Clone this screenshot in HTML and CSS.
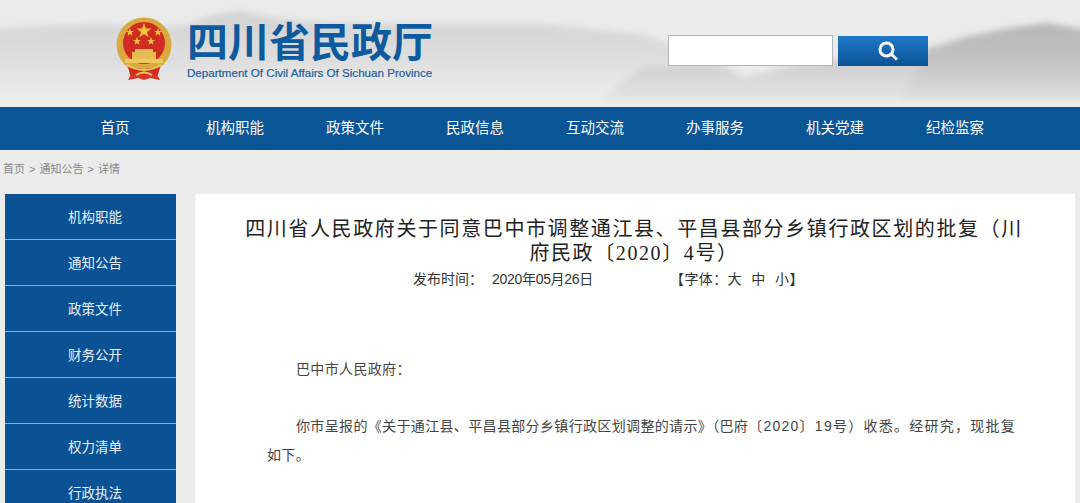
FILE: index.html
```html
<!DOCTYPE html>
<html lang="zh-CN">
<head>
  <meta charset="UTF-8" />
  <meta name="viewport" content="width=device-width, initial-scale=1" />
  <title>四川省民政厅</title>
  <link rel="stylesheet" href="styles.css">
</head>
<body>
  <header class="header">
    <svg class="header-bg" viewBox="0 0 1080 107" preserveAspectRatio="none" aria-hidden="true">
      <defs>
        <filter id="ink" filterUnits="userSpaceOnUse" x="-40" y="-40" width="1160" height="190"><feGaussianBlur stdDeviation="3" /></filter>
        <linearGradient id="left-hill" x1="0" y1="0" x2="0" y2="1">
          <stop offset="0" stop-color="#d2d2d2" />
          <stop offset="0.55" stop-color="#dedede" />
          <stop offset="1" stop-color="#ededed" />
        </linearGradient>
        <linearGradient id="mid-hill" x1="0" y1="0" x2="0" y2="1">
          <stop offset="0" stop-color="#c8c8c8" />
          <stop offset="1" stop-color="#e4e4e4" />
        </linearGradient>
        <linearGradient id="right-hill" x1="0" y1="0" x2="0" y2="1">
          <stop offset="0" stop-color="#b6b6b6" />
          <stop offset="0.6" stop-color="#c6c6c6" />
          <stop offset="1" stop-color="#dfdfdf" />
        </linearGradient>
      </defs>
      <path filter="url(#ink)" fill="url(#left-hill)" d="M-20 30 L50 26 L100 24 L150 27 L185 26 L215 14 L240 11 L265 16 L300 21 L400 24 L540 24 L640 34 L720 60 L760 100 L-20 100 Z" />
      <path filter="url(#ink)" fill="url(#mid-hill)" d="M600 100 L640 68 L700 64 L725 68 L745 78 L765 72 L790 66 L850 58 L930 50 L1000 62 L1100 60 L1100 100 Z" />
      <path filter="url(#ink)" fill="url(#right-hill)" d="M900 98 L930 48 L965 37 L1010 28 L1047 23 L1100 32 L1100 98 Z" />
    </svg>
    <div class="logo">
      <svg class="emblem" viewBox="0 0 60 66" aria-hidden="true">
        <path fill="#d8352a" d="M10 44 L17 58 L14 64 L24 62 L30 64 L36 62 L46 64 L43 58 L50 44 Z" />
        <circle cx="30" cy="29" r="27.5" fill="#d9a93f" />
        <circle cx="30" cy="27" r="21" fill="#d12c22" />
        <polygon fill="#f3c53f" points="30,7 31.8,12.5 37.6,12.5 32.9,15.9 34.7,21.4 30,18 25.3,21.4 27.1,15.9 22.4,12.5 28.2,12.5" />
        <polygon fill="#f3c53f" points="16,12 17,15 20,15 17.6,16.8 18.5,19.7 16,18 13.5,19.7 14.4,16.8 12,15 15,15" />
        <polygon fill="#f3c53f" points="44,12 45,15 48,15 45.6,16.8 46.5,19.7 44,18 41.5,19.7 42.4,16.8 40,15 43,15" />
        <polygon fill="#f3c53f" points="23,21 24,24 27,24 24.6,25.8 25.5,28.7 23,27 20.5,28.7 21.4,25.8 19,24 22,24" />
        <polygon fill="#f3c53f" points="37,21 38,24 41,24 38.6,25.8 39.5,28.7 37,27 34.5,28.7 35.4,25.8 33,24 36,24" />
        <path fill="#e6bb52" d="M21 33 H39 V36 H42 V43 H18 V36 H21 Z" />
        <rect x="11" y="43" width="38" height="4" fill="#efc95f" />
        <path fill="#d12c22" d="M14 50 Q30 56 46 50 L44 59 H16 Z" />
        <path fill="none" stroke="#efc95f" stroke-width="2" d="M13 49 Q30 59 47 49 M22 59 Q30 54 38 59" />
      </svg>
      <div class="logo-text">
        <div class="logo-name">四川省民政厅</div>
        <div class="logo-en">Department Of Civil Affairs Of Sichuan Province</div>
      </div>
    </div>
    <form class="search">
      <input class="search-input" type="text" />
      <button class="search-btn" type="button" aria-label="搜索">
        <svg viewBox="0 0 20 20" width="20" height="20" aria-hidden="true">
          <circle cx="8.5" cy="8.5" r="6.5" fill="none" stroke="#fff" stroke-width="3" />
          <path d="M13 13 L19 18.5" stroke="#fff" stroke-width="3" fill="none" />
        </svg>
      </button>
    </form>
  </header>

  <nav class="nav">
    <a class="nav-item">首页</a>
    <a class="nav-item">机构职能</a>
    <a class="nav-item">政策文件</a>
    <a class="nav-item">民政信息</a>
    <a class="nav-item">互动交流</a>
    <a class="nav-item">办事服务</a>
    <a class="nav-item">机关党建</a>
    <a class="nav-item">纪检监察</a>
  </nav>

  <div class="crumbs">首页 &gt; 通知公告 &gt; 详情</div>

  <div class="main">
    <aside class="side">
      <a class="side-item">机构职能</a>
      <a class="side-item">通知公告</a>
      <a class="side-item">政策文件</a>
      <a class="side-item">财务公开</a>
      <a class="side-item">统计数据</a>
      <a class="side-item">权力清单</a>
      <a class="side-item">行政执法</a>
    </aside>
    <article class="article">
      <h1 class="article-title">四川省人民政府关于同意巴中市调整通江县、平昌县部分乡镇行政区划的批复（川府民政〔2020〕4号）</h1>
      <div class="meta">
        <span class="meta-date">发布时间：<span class="meta-num">2020年05月26日</span></span>
        <span class="meta-font">【字体：大 中 小】</span>
      </div>
      <div class="article-body">
        <p>巴中市人民政府：</p>
        <p>你市呈报的《关于通江县、平昌县部分乡镇行政区划调整的请示》（巴府<span class="body-wide">〔2020〕19号）收悉。经研究，现批复</span>如下。</p>
      </div>
    </article>
  </div>
</body>
</html>
```

FILE: styles.css
```css
* { margin: 0; padding: 0; box-sizing: border-box; }
html, body {
  height: 503px;
  overflow: hidden;
}
body {
  font-family: "Liberation Sans", "Noto Sans CJK SC", sans-serif;
  background: #ebebeb;
  color: #333;
}
/* Header */
.header {
  height: 107px;
  position: relative;
  display: flex;
  background: #ebebeb;
}
.header-bg {
  position: absolute;
  top: 0; left: 0;
  width: 100%; height: 100%;
}
.logo {
  position: relative;
  display: flex;
  gap: 13px;
  margin: 16px 0 0 114px;
}
.emblem {
  width: 60px;
  height: 66px;
}
.logo-name {
  font-family: "Noto Sans CJK SC", sans-serif;
  font-size: 41px;
  font-weight: 700;
  line-height: 46px;
  color: #0d5a9e;
}
.logo-en {
  font-size: 11.6px;
  line-height: 14px;
  margin-top: 4px;
  color: #1d5f9e;
  -webkit-text-stroke: 0.2px #1d5f9e;
  white-space: nowrap;
}
.search {
  position: relative;
  display: flex;
  align-items: center;
  gap: 5px;
  margin: 35px 0 0 235px;
  height: 31px;
}
.search-input {
  width: 165px;
  height: 31px;
  border: 1px solid #b5b5b5;
  background: #fff;
}
.search-btn {
  width: 90px;
  height: 30px;
  padding-left: 10px;
  border: none;
  background: linear-gradient(#2079c9, #0b5494);
  display: flex;
  align-items: center;
  justify-content: center;
}
/* Nav */
.nav {
  height: 43px;
  display: flex;
  padding-left: 55px;
  background: #0a5596;
}
.nav-item {
  width: 120px;
  line-height: 43px;
  text-align: center;
  font-size: 14.5px;
  color: #fff;
}
/* Breadcrumb */
.crumbs {
  height: 44px;
  line-height: 39px;
  padding-left: 3px;
  font-size: 11px;
  word-spacing: 1px;
  color: #888;
}
/* Main */
.main {
  display: flex;
  align-items: flex-start;
  padding-left: 5px;
}
.side {
  width: 171px;
  flex-shrink: 0;
  margin-right: 19px;
}
.side-item {
  display: block;
  height: 46px;
  padding: 1px 0 0 9px;
  line-height: 45px;
  border-bottom: 1px solid #7fb0dc;
  background: #0a5294;
  text-align: center;
  font-size: 13.5px;
  color: #e8f0f8;
}
.article {
  width: 880px;
  height: 309px;
  background: #fff;
  padding: 23px 53px 0 72px;
}
.article-title {
  font-family: "Liberation Serif", "Noto Sans CJK SC", serif;
  width: 778px;
  margin-left: -22px;
  font-size: 20px;
  font-weight: 400;
  line-height: 24px;
  letter-spacing: 1.6px;
  text-align: center;
  color: #222;
}
.meta {
  display: flex;
  margin-top: 3px;
  padding-left: 146px;
  font-size: 14px;
  line-height: 22px;
  color: #333;
}
.meta-date {
  width: 257px;
}
.meta-num {
  margin-left: 9px;
  letter-spacing: -0.3px;
}
.meta-font {
  word-spacing: 5px;
  letter-spacing: 0.4px;
}
.article-body {
  margin-top: 65px;
  font-size: 14px;
  line-height: 29px;
  letter-spacing: 0.35px;
  color: #444;
}
.article-body p {
  text-indent: 29px;
  margin-bottom: 28px;
}
.body-wide {
  letter-spacing: 1.25px;
}
```
